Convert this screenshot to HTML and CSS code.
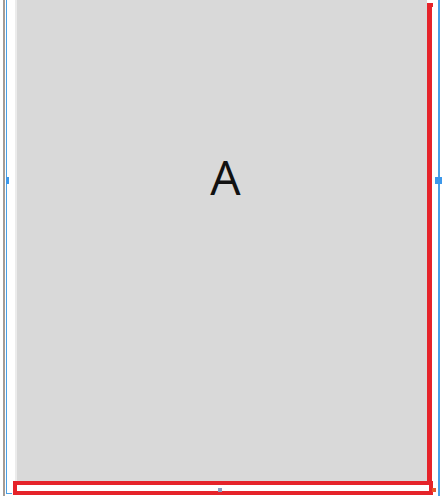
FILE: index.html
```html
<!DOCTYPE html>
<html>
<head>
<meta charset="utf-8">
<link rel="stylesheet" href="styles.css">
</head>
<body>
<div class="stage">
  <div class="rule-gray"></div>
  <div class="rule-blue"></div>
  <div class="panel-col">
    <div class="panel"><span class="letter">A</span></div>
  </div>
  <div class="rule-right"></div>

  <div class="sel-right"></div>
  <div class="sel-bottom"></div>
  <div class="handle handle-left"></div>
  <div class="handle handle-right"></div>
  <div class="handle-small handle-bottom"></div>
  <div class="handle-small handle-corner"></div>
  <div class="tick-left"></div>
</div>
</body>
</html>
```

FILE: styles.css
```css
html, body {
  margin: 0;
  padding: 0;
  background: #ffffff;
}
.stage {
  position: relative;
  width: 442px;
  height: 496px;
  display: flex;
  overflow: hidden;
  font-family: "Open Sans", "Liberation Sans", sans-serif;
}
.rule-gray {
  width: 2px;
  margin-left: 3px;
  background: #a49c96;
}
.rule-blue {
  width: 1px;
  margin-left: 1px;
  height: 494px;
  background: #4aa0e6;
}
.panel-col {
  margin-left: 8px;
  width: 412px;
  height: 482px;
  display: flex;
}
.panel {
  flex: 1;
  margin-left: 0;
  border-left: 2px solid #ececec;
  background: #d9d9d9;
  display: flex;
  justify-content: center;
  align-items: flex-start;
  padding-top: 153px;
  padding-left: 7px;
}
.letter {
  font-size: 48px;
  line-height: 48px;
  color: #111111;
}
.rule-right {
  width: 2px;
  margin-left: 11px;
  background: #4aa0e6;
}
.sel-right {
  position: absolute;
  left: 427px;
  top: 3px;
  width: 6px;
  height: 487px;
  border-left: 5px solid #e5232a;
  border-top: 4px solid #e5232a;
  box-sizing: border-box;
}
.sel-bottom {
  position: absolute;
  left: 13px;
  top: 481px;
  width: 420px;
  height: 14px;
  border: 4px solid #e5232a;
  box-sizing: border-box;
  background: #ffffff;
}
.handle {
  position: absolute;
  top: 177px;
  height: 7px;
  background: #3d98ea;
}
.handle-left {
  left: 6px;
  width: 3px;
}
.handle-right {
  left: 435px;
  width: 7px;
}
.handle-small {
  position: absolute;
  width: 4px;
  height: 4px;
}
.handle-bottom {
  left: 218px;
  top: 488px;
  background: #8a9cc0;
}
.handle-corner {
  left: 432px;
  top: 488px;
  background: #e8562a;
}
.tick-left {
  position: absolute;
  left: 6px;
  top: 493px;
  width: 6px;
  height: 1px;
  background: #4aa0e6;
}
```
